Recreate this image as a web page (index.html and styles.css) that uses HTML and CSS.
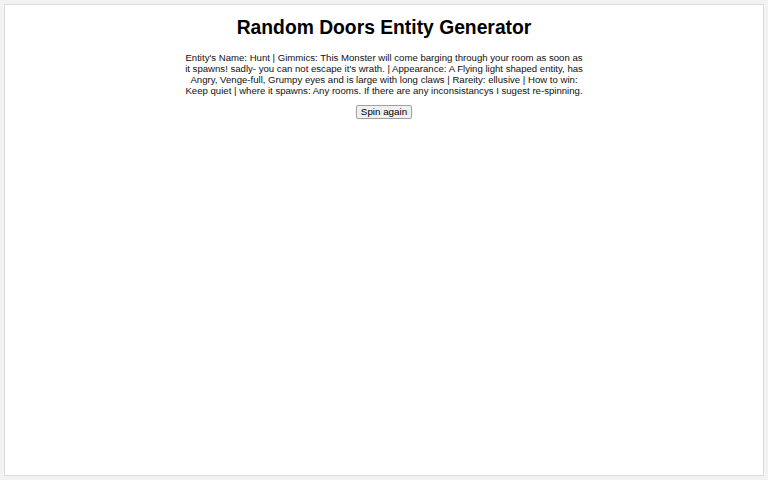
FILE: index.html
```html
<!DOCTYPE html>
<html>
<head>
<meta charset="utf-8">
<link rel="stylesheet" href="styles.css">
</head>
<body>
<main class="panel">
  <h1 class="title">Random Doors Entity Generator</h1>
  <p class="result">Entity's Name: Hunt | Gimmics: This Monster will come barging through your room as soon as it spawns! sadly- you can not escape it's wrath. | Appearance: A Flying light shaped entity, has Angry, Venge-full, Grumpy eyes and is large with long claws | Rareity: ellusive | How to win: Keep quiet | where it spawns: Any rooms. If there are any inconsistancys I sugest re-spinning.</p>
  <button class="spin" type="button">Spin again</button>
</main>
</body>
</html>
```
FILE: styles.css
```css
html, body {
  margin: 0;
  padding: 0;
}

body {
  background: #f2f2f2;
  padding: 4px;
  font-family: "Liberation Sans", Arial, sans-serif;
  color: #000;
  height: 480px;
  box-sizing: border-box;
}

.panel {
  background: #fff;
  border: 1px solid #dcdcdc;
  height: 472px;
  box-sizing: border-box;
  display: flex;
  flex-direction: column;
  align-items: center;
}

.title {
  margin: 12px 0 0;
  font-size: 19.3px;
  line-height: 22px;
  font-weight: bold;
}

.result {
  width: 398px;
  margin: 13px 0 0;
  font-size: 9.6px;
  line-height: 11px;
  text-align: center;
  color: #111;
}

.spin {
  margin-top: 9px;
  font-family: "Liberation Sans", Arial, sans-serif;
  font-size: 9.8px;
  line-height: 12px;
  padding: 0 4px;
  background: #efefef;
  border: 1px solid #a0a0a0;
  border-radius: 2px;
  color: #000;
}
```
